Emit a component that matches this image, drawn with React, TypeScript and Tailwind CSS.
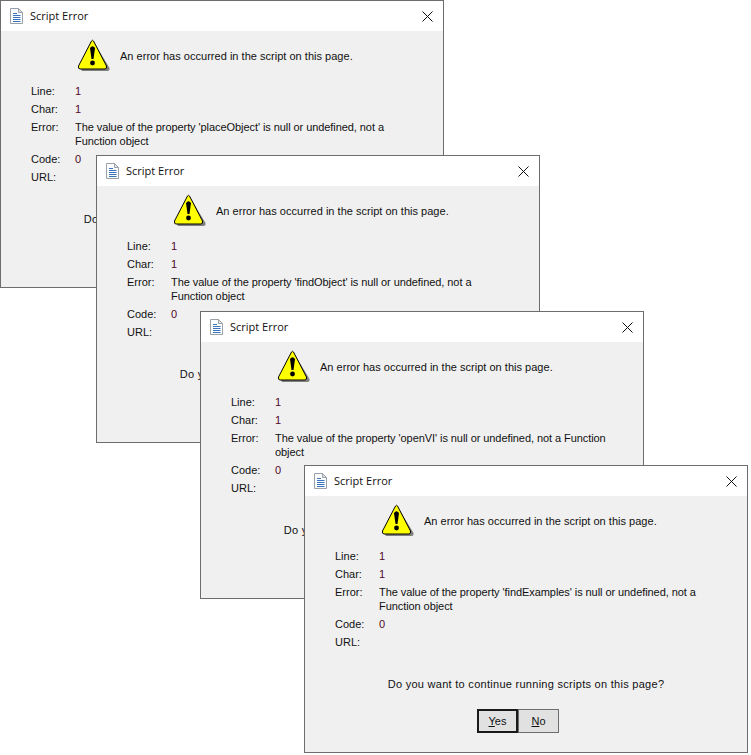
const WINDOWS = [
  { pos: "left-0 top-0", prop: "placeObject", wrap: ["The value of the property 'placeObject' is null or undefined, not a", "Function object"] },
  { pos: "left-[96px] top-[155px]", prop: "findObject", wrap: ["The value of the property 'findObject' is null or undefined, not a", "Function object"] },
  { pos: "left-[200px] top-[311px]", prop: "openVI", wrap: ["The value of the property 'openVI' is null or undefined, not a Function", "object"] },
  { pos: "left-[304px] top-[465px]", prop: "findExamples", wrap: ["The value of the property 'findExamples' is null or undefined, not a", "Function object"] },
];

function DocIcon() {
  return (
    <svg width="13" height="16" viewBox="0 0 13 16" className="shrink-0">
      <path d="M0.5 0.5H8.5L12.5 4.5V15.5H0.5Z" fill="#fbfcfd" stroke="#9aa1a9" />
      <path d="M8.5 0.5V4.5H12.5Z" fill="#e3e7ec" stroke="#9aa1a9" />
      <path d="M3 5.5H7M3 7.5H10.5M3 9.5H10.5M3 11.5H10.5M3 13.5H10.5" stroke="#3a74bd" fill="none" />
    </svg>
  );
}

function WarnIcon() {
  return (
    <svg width="34" height="34" viewBox="0 0 34 34" className="shrink-0">
      <path d="M18 5 L32.5 29 Q33 32 30.5 32 H5 L4 30 Z" fill="#808080" />
      <path d="M14.5 2 Q15.5 0.5 16.5 2 L29.5 27 Q30 30 28 30 H3 Q1 30 1.5 27 Z" fill="#ffff00" stroke="#000" strokeWidth="1" />
      <path d="M13 9 Q15.5 5.5 18 9 L16.5 20 H14.5 Z" fill="#000" />
      <circle cx="15.5" cy="24" r="2.4" fill="#000" />
    </svg>
  );
}

function CloseIcon() {
  return (
    <svg width="11" height="11" viewBox="0 0 11 11" className="shrink-0">
      <path d="M0.5 0.5L10.5 10.5M10.5 0.5L0.5 10.5" stroke="#111" strokeWidth="1" fill="none" />
    </svg>
  );
}

function Row({ label, children }: { label: string; children?: React.ReactNode }) {
  return (
    <div className="flex mb-1 whitespace-nowrap">
      <div className="w-11 shrink-0">{label}</div>
      <div className="text-[#500828]">{children}</div>
    </div>
  );
}

function ScriptError({ pos, wrap }: { pos: string; wrap: string[] }) {
  return (
    <div className={`absolute ${pos} w-[444px] h-[288px] flex flex-col border border-[#6d6d6d] bg-[#f0f0f0] text-[11px] leading-[14px] text-[#111] font-['Liberation_Sans',sans-serif]`}>
      <div className="h-[30px] shrink-0 bg-white flex items-center pl-[9px] pr-[10px]">
        <DocIcon />
        <span className="ml-[7px] flex-1 font-['Open_Sans',sans-serif] text-[11px]">Script Error</span>
        <CloseIcon />
      </div>
      <div className="flex-1 flex flex-col">
        <div className="flex items-start pl-[76px] pt-[8px] h-[43px]">
          <WarnIcon />
          <span className="ml-[9px] mt-[10px] tracking-[0.02px]">An error has occurred in the script on this page.</span>
        </div>
        <div className="pl-[30px] pt-[10px]">
          <Row label="Line:">1</Row>
          <Row label="Char:">1</Row>
          <Row label="Error:">
            <div className="text-[#111] tracking-[-0.07px]">
              {wrap[0]}
              <br />
              {wrap[1]}
            </div>
          </Row>
          <Row label="Code:">0</Row>
          <Row label="URL:" />
        </div>
        <div className="text-center mt-[24px] tracking-[0.28px]">Do you want to continue running scripts on this page?</div>
        <div className="flex justify-center pr-4 mt-[18px]">
          <button className="w-[41px] h-[24px] border-2 border-[#1a1a1a] bg-[#e1e1e1]"><u>Y</u>es</button>
          <button className="w-[41px] h-[24px] border border-[#6d6d6d] bg-[#e1e1e1]"><u>N</u>o</button>
        </div>
      </div>
    </div>
  );
}

export default function App() {
  return (
    <div className="relative w-[751px] h-[755px] bg-white overflow-hidden">
      {WINDOWS.map(w => (
        <ScriptError key={w.prop} pos={w.pos} wrap={w.wrap} />
      ))}
    </div>
  );
}
